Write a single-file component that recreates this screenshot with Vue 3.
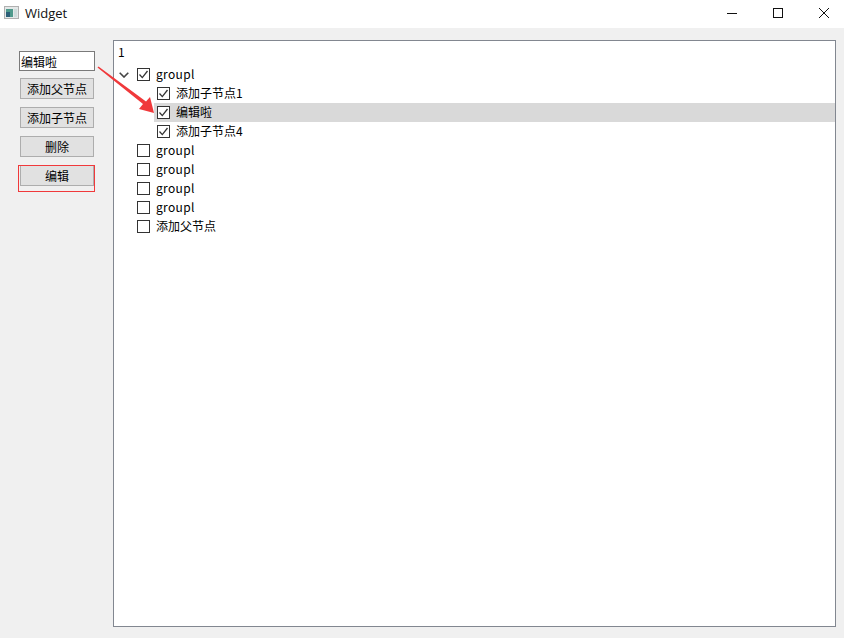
<script setup>
const buttons = [
  { label: '添加父节点' },
  { label: '添加子节点' },
  { label: '删除' },
  { label: '编辑' },
]
const children = [
  { label: '添加子节点1', on: false },
  { label: '编辑啦', on: true },
  { label: '添加子节点4', on: false },
]
const others = [
  { label: 'groupl', latin: true },
  { label: 'groupl', latin: true },
  { label: 'groupl', latin: true },
  { label: 'groupl', latin: true },
  { label: '添加父节点', latin: false },
]
</script>

<template>
  <div class="window">
    <header class="titlebar">
      <svg class="appicon" width="16" height="16" viewBox="0 0 16 16">
        <rect x="0.5" y="1.5" width="14" height="12" fill="#e4e8e8" stroke="#b0b0b0" />
        <rect x="2" y="4" width="7" height="8" fill="#4f9a8c" />
        <rect x="2" y="7" width="4" height="5" fill="#2c5f78" />
        <rect x="10" y="4" width="3" height="8" fill="#cfdcdc" />
      </svg>
      <span class="title">Widget</span>
      <div class="controls">
        <span class="ctl"><svg width="12" height="12" viewBox="0 0 12 12"><path d="M1 6.5H11" stroke="#111" fill="none" /></svg></span>
        <span class="ctl"><svg width="12" height="12" viewBox="0 0 12 12"><rect x="1.5" y="1.5" width="9" height="9" stroke="#111" fill="none" /></svg></span>
        <span class="ctl"><svg width="12" height="12" viewBox="0 0 12 12"><path d="M1 1L11 11M11 1L1 11" stroke="#111" fill="none" /></svg></span>
      </div>
    </header>

    <main class="content">
      <aside class="side">
        <input class="edit" value="编辑啦" />
        <button v-for="b in buttons" :key="b.label" class="btn">{{ b.label }}</button>
      </aside>

      <section class="tree">
        <div class="head">1</div>
        <div class="row top">
          <svg class="chev" width="10" height="6" viewBox="0 0 10 6"><path d="M0.7 0.7L5 5L9.3 0.7" stroke="#444" stroke-width="1.6" fill="none" /></svg>
          <span class="box"><svg width="13" height="13" viewBox="0 0 13 13"><path d="M2.5 6.5L5.3 9.6L10.5 3" stroke="#333" fill="none" stroke-width="1.3" /></svg></span>
          <span class="label latin">groupl</span>
        </div>
        <div v-for="c in children" :key="c.label" class="row child" :class="{ current: c.on }">
          <span class="box"><svg width="13" height="13" viewBox="0 0 13 13"><path d="M2.5 6.5L5.3 9.6L10.5 3" stroke="#333" fill="none" stroke-width="1.3" /></svg></span>
          <span class="label">{{ c.label }}</span>
        </div>
        <div v-for="(o, i) in others" :key="i" class="row plain">
          <span class="box"></span>
          <span class="label" :class="{ latin: o.latin }">{{ o.label }}</span>
        </div>
      </section>
    </main>

    <div class="redbox"></div>
    <svg class="arrow" width="70" height="70" viewBox="0 0 70 70">
      <path d="M0.5 1.5L1.5 0.5L49 35.5L53 31L57 47L42 43L46 38Z" fill="#f0393b" />
    </svg>
  </div>
</template>

<style scoped>
.window {
  position: relative;
  width: 844px;
  height: 638px;
  display: flex;
  flex-direction: column;
  background: #f0f0f0;
  font-family: "Noto Sans CJK SC", "Open Sans", sans-serif;
  font-size: 12px;
  color: #000;
  overflow: hidden;
}
.titlebar {
  height: 28px;
  background: #fff;
  display: flex;
  align-items: center;
  padding-left: 4px;
  flex: none;
}
.appicon { margin-right: 5px; margin-bottom: 2px; }
.title {
  font-family: "Open Sans", sans-serif;
  font-size: 13px;
  color: #111;
  margin-bottom: 3px;
}
.controls {
  margin-left: auto;
  margin-right: -3px;
  display: flex;
  margin-bottom: 3px;
}
.ctl {
  width: 46px;
  display: flex;
  justify-content: center;
  align-items: center;
}
.content {
  flex: 1;
  display: flex;
  align-items: flex-start;
  padding: 12px 8px 10px 19px;
  min-height: 0;
}
.side {
  width: 76px;
  flex: none;
  margin-right: 18px;
  padding-top: 11px;
  display: flex;
  flex-direction: column;
  align-items: center;
  gap: 8px;
}
.edit {
  width: 76px;
  height: 20px;
  box-sizing: border-box;
  border: 1px solid #7a7a7a;
  background: #fff;
  padding: 0 1px;
  font: inherit;
  color: #000;
  outline: none;
  margin-bottom: -1px;
}
.btn {
  width: 74px;
  height: 21px;
  box-sizing: border-box;
  border: 1px solid #adadad;
  background: #e1e1e1;
  padding: 0;
  font: inherit;
  color: #000;
  line-height: 19px;
}
.tree {
  flex: 1;
  height: 587px;
  box-sizing: border-box;
  border: 1px solid #828790;
  background: #fff;
}
.head {
  height: 24px;
  line-height: 22px;
  padding-left: 4px;
}
.row {
  height: 19px;
  display: flex;
  align-items: center;
}
.top { padding-left: 5px; }
.plain { padding-left: 23px; }
.chev { margin-right: 8px; }
.child { padding-left: 43px; }
.current { margin-left: 40px; padding-left: 3px; background: #d9d9d9; }
.box {
  width: 13px;
  height: 13px;
  box-sizing: border-box;
  border: 1px solid #333;
  background: #fff;
  margin-right: 6px;
  position: relative;
  flex: none;
}
.box svg { position: absolute; left: -1px; top: -1px; }
.label { line-height: 19px; white-space: nowrap; margin-bottom: 2px; }
.latin { letter-spacing: 0.35px; }
.redbox {
  position: absolute;
  left: 18px;
  top: 165px;
  width: 77px;
  height: 27px;
  box-sizing: border-box;
  border: 1px solid #f0393b;
}
.arrow {
  position: absolute;
  left: 97px;
  top: 66px;
}
</style>
